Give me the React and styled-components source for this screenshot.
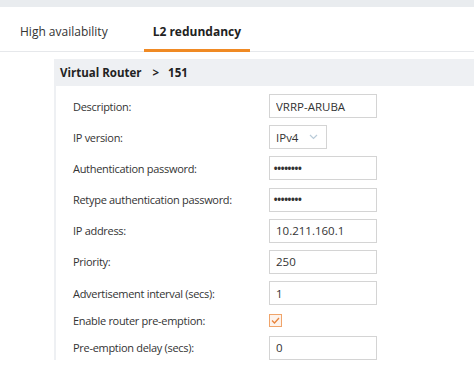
import React from "react";
import styled, { createGlobalStyle } from "styled-components";

const GlobalStyle = createGlobalStyle`
  body {
    margin: 0;
    background: #fff;
    font-family: "Open Sans", "Liberation Sans", sans-serif;
    color: #333;
  }
`;

const TopBar = styled.div`
  height: 7px;
  background: #e9ecef;
`;

const Tabs = styled.div`
  display: flex;
  padding-left: 10px;
  margin-top: 16px;
  border-bottom: 1px solid #e6e8eb;
`;

const Tab = styled.div`
  padding: 0 ${(p) => (p.$active ? "9px" : "10px")} 8px;
  margin-right: ${(p) => (p.$active ? "0" : "26px")};
  font-size: 12px;
  line-height: 18px;
  font-weight: ${(p) => (p.$active ? 700 : 400)};
  color: ${(p) => (p.$active ? "#222" : "#333")};
  border-bottom: 3px solid ${(p) => (p.$active ? "#f08a24" : "transparent")};
  margin-bottom: -1px;
`;

const Panel = styled.div`
  margin: 7px 0 0 54px;
`;

const PanelHeader = styled.div`
  height: 27px;
  background: #eef0f3;
  display: flex;
  align-items: center;
  padding-left: 6px;
  font-size: 11.5px;
  font-weight: 700;
  color: #222;
`;

const Chevron = styled.span`
  margin: 0 9px 0 11px;
`;

const PanelBody = styled.div`
  border-left: 2px solid #eef0f3;
  padding: 8px 0 0 17px;
  display: flex;
  flex-direction: column;
  gap: 7.2px;
`;

const Row = styled.div`
  display: grid;
  grid-template-columns: 196px auto;
  align-items: center;
  height: ${(p) => (p.$short ? "16px" : "24px")};
`;

const Label = styled.label`
  font-size: 11px;
  letter-spacing: -0.3px;
  color: #333;
`;

const Input = styled.input`
  box-sizing: border-box;
  width: 108px;
  height: 24px;
  border: 1px solid #d4d4d4;
  padding: 0 6px;
  font-family: "Open Sans", "Liberation Sans", sans-serif;
  font-size: 11.5px;
  color: #333;
  outline: none;
  &[type="password"] {
    font-size: 14px;
    letter-spacing: -1.8px;
    padding-left: 3px;
  }
`;

const Select = styled.div`
  box-sizing: border-box;
  width: 58px;
  height: 24px;
  border: 1px solid #d4d4d4;
  padding: 0 8px 0 6px;
  display: flex;
  align-items: center;
  justify-content: space-between;
  font-size: 11.5px;
`;

const Check = styled.div`
  box-sizing: border-box;
  width: 13px;
  height: 13px;
  border: 1px solid #f0a46a;
  background: #fdf3ec;
  display: flex;
  align-items: center;
  justify-content: center;
`;

export default function App() {
  return (
    <>
      <GlobalStyle />
      <TopBar />
      <Tabs>
        <Tab>High availability</Tab>
        <Tab $active>L2 redundancy</Tab>
      </Tabs>
      <Panel>
        <PanelHeader>
          Virtual Router<Chevron>&gt;</Chevron>151
        </PanelHeader>
        <PanelBody>
          <Row>
            <Label>Description:</Label>
            <Input defaultValue="VRRP-ARUBA" />
          </Row>
          <Row>
            <Label>IP version:</Label>
            <Select>
              IPv4
              <svg width="9" height="6" viewBox="0 0 9 6">
                <path d="M1 1l3.5 3.5L8 1" fill="none" stroke="#b9cbd8" strokeWidth="1.2" />
              </svg>
            </Select>
          </Row>
          <Row>
            <Label>Authentication password:</Label>
            <Input type="password" defaultValue="12345678" />
          </Row>
          <Row>
            <Label>Retype authentication password:</Label>
            <Input type="password" defaultValue="12345678" />
          </Row>
          <Row>
            <Label>IP address:</Label>
            <Input defaultValue="10.211.160.1" />
          </Row>
          <Row>
            <Label>Priority:</Label>
            <Input defaultValue="250" />
          </Row>
          <Row>
            <Label>Advertisement interval (secs):</Label>
            <Input defaultValue="1" />
          </Row>
          <Row $short>
            <Label>Enable router pre-emption:</Label>
            <Check>
              <svg width="9" height="7" viewBox="0 0 9 7">
                <path d="M1 3.5l2.5 2.5L8 1" fill="none" stroke="#e8843c" strokeWidth="1.3" />
              </svg>
            </Check>
          </Row>
          <Row>
            <Label>Pre-emption delay (secs):</Label>
            <Input defaultValue="0" />
          </Row>
        </PanelBody>
      </Panel>
    </>
  );
}
